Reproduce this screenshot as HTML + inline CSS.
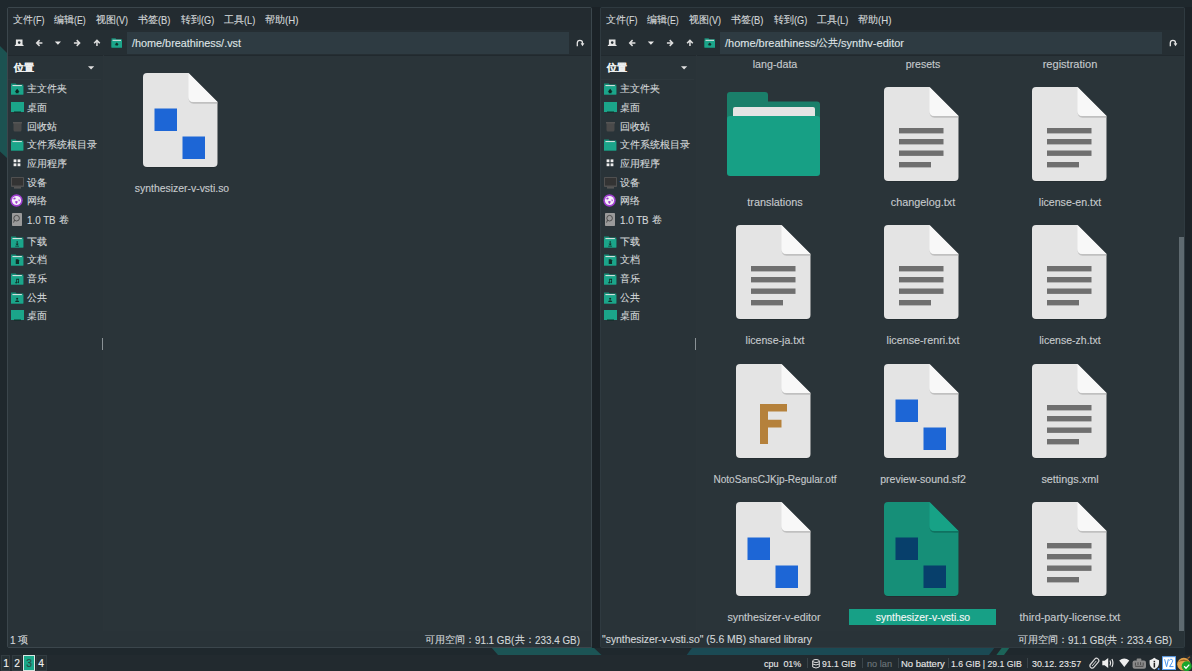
<!DOCTYPE html><html><head><meta charset="utf-8"><style>
*{margin:0;padding:0;box-sizing:border-box}
html,body{width:1192px;height:671px;overflow:hidden;background:#1f282d;font-family:"Liberation Sans",sans-serif;color:#d3d7d9}
.a{position:absolute}
.t{position:absolute;white-space:nowrap;line-height:1;-webkit-text-stroke:0.12px currentColor}
svg{position:absolute;overflow:visible}
</style></head><body>
<svg class="a" style="left:0;top:0" width="1192" height="671"><polygon points="0,45.9 7,53 7,158 0,151.6" fill="#1c5251"/><polygon points="491,647 593,647 601.5,655 498,655" fill="#1c5455"/><polygon points="692.6,647 995,647 989,655 686.7,655" fill="#1b4a54"/><polygon points="1002.4,647 1010,647 1004,655 996.4,655" fill="#1c6459"/><rect x="592" y="7" width="8" height="641" fill="#1b2227"/><rect x="1185" y="7" width="7" height="648" fill="#1c2328"/></svg>
<div class="a" style="left:7px;top:7px;width:585px;height:641px;background:#2a3439;border:1px solid #3b464c;border-radius:2px"></div>
<div class="a" style="left:8px;top:8px;width:583px;height:22px;background:#232b30"></div>
<div class="t" style="left:13.10px;top:14.90px;font-size:10.0px;color:#d3d7d9;font-weight:normal;">文</div>
<div class="t" style="left:23.10px;top:14.90px;font-size:10.0px;color:#d3d7d9;font-weight:normal;">件</div>
<div class="t" style="left:33.10px;top:14.80px;font-size:10.6px;color:#d3d7d9;font-weight:normal;transform:scaleX(0.8417);transform-origin:0 0;white-space:pre;">(F)</div>
<div class="t" style="left:54.40px;top:14.90px;font-size:10.0px;color:#d3d7d9;font-weight:normal;">编</div>
<div class="t" style="left:64.40px;top:14.90px;font-size:10.0px;color:#d3d7d9;font-weight:normal;">辑</div>
<div class="t" style="left:74.40px;top:14.80px;font-size:10.6px;color:#d3d7d9;font-weight:normal;transform:scaleX(0.8181);transform-origin:0 0;white-space:pre;">(E)</div>
<div class="t" style="left:95.50px;top:14.90px;font-size:10.0px;color:#d3d7d9;font-weight:normal;">视</div>
<div class="t" style="left:105.50px;top:14.90px;font-size:10.0px;color:#d3d7d9;font-weight:normal;">图</div>
<div class="t" style="left:115.50px;top:14.80px;font-size:10.6px;color:#d3d7d9;font-weight:normal;transform:scaleX(0.8493);transform-origin:0 0;white-space:pre;">(V)</div>
<div class="t" style="left:138.00px;top:14.90px;font-size:10.0px;color:#d3d7d9;font-weight:normal;">书</div>
<div class="t" style="left:148.00px;top:14.90px;font-size:10.0px;color:#d3d7d9;font-weight:normal;">签</div>
<div class="t" style="left:158.00px;top:14.80px;font-size:10.6px;color:#d3d7d9;font-weight:normal;transform:scaleX(0.8847);transform-origin:0 0;white-space:pre;">(B)</div>
<div class="t" style="left:180.50px;top:14.90px;font-size:10.0px;color:#d3d7d9;font-weight:normal;">转</div>
<div class="t" style="left:190.50px;top:14.90px;font-size:10.0px;color:#d3d7d9;font-weight:normal;">到</div>
<div class="t" style="left:200.50px;top:14.80px;font-size:10.6px;color:#d3d7d9;font-weight:normal;transform:scaleX(0.8677);transform-origin:0 0;white-space:pre;">(G)</div>
<div class="t" style="left:224.00px;top:14.90px;font-size:10.0px;color:#d3d7d9;font-weight:normal;">工</div>
<div class="t" style="left:234.00px;top:14.90px;font-size:10.0px;color:#d3d7d9;font-weight:normal;">具</div>
<div class="t" style="left:244.00px;top:14.80px;font-size:10.6px;color:#d3d7d9;font-weight:normal;transform:scaleX(0.8678);transform-origin:0 0;white-space:pre;">(L)</div>
<div class="t" style="left:264.50px;top:14.90px;font-size:10.0px;color:#d3d7d9;font-weight:normal;">帮</div>
<div class="t" style="left:274.50px;top:14.90px;font-size:10.0px;color:#d3d7d9;font-weight:normal;">助</div>
<div class="t" style="left:284.50px;top:14.80px;font-size:10.6px;color:#d3d7d9;font-weight:normal;transform:scaleX(0.9113);transform-origin:0 0;white-space:pre;">(H)</div>
<div class="a" style="left:8px;top:30px;width:583px;height:25px;background:#252e33"></div>
<div class="a" style="left:126.5px;top:32px;width:442.5px;height:22px;background:#2e3b42"></div>
<div class="t" style="left:131.8px;top:38.13px;font-size:10.8px;color:#dfe3e5;font-weight:normal;transform:scaleX(1.0033);transform-origin:0 0;">/home/breathiness/.vst</div>
<svg style="left:0px;top:0px" width="130" height="60" viewBox="0 0 130 60"><path d="M15.9,39.4 H22.5 V44.6 L23.6,45.2 V46.1 H14.8 V45.2 L15.9,44.6 Z" fill="#e6e6e6"/><circle cx="19.2" cy="42.6" r="1.3" fill="#252e33"/><path d="M42.4,43 H37.2 M39.6,40.1 L36.7,43 L39.6,45.9" stroke="#dedede" stroke-width="1.5" fill="none"/><path d="M54.8,41.6 H61 L57.9,44.8 Z" fill="#e8e8e8"/><path d="M73.9,43 H79.1 M76.7,40.1 L79.6,43 L76.7,45.9" stroke="#dedede" stroke-width="1.5" fill="none"/><path d="M96.95,46.1 V41 M94.1,43.3 L96.95,40.4 L99.8,43.3" stroke="#dedede" stroke-width="1.5" fill="none"/><path d="M111.5,38.3 H115.5 L116.3,39.2 H122 V47.6 H111.5 Z" fill="#168f78"/><rect x="111.5" y="40.6" width="10.5" height="7" fill="#1ba58a"/><rect x="112.5" y="39.8" width="8.5" height="1" fill="#e8e8e8"/><path d="M116.75,42.6 L118.8,44.6 H118 V45.6 H115.5 V44.6 H114.7 Z" fill="#10302a"/></svg>
<svg style="left:576px;top:38px" width="10" height="10" viewBox="0 0 10 10"><path d="M1.3,8.2 V5 Q1.3,2.3 3.9,2.3 Q6.5,2.3 6.5,5 V5.8" stroke="#e4e4e4" stroke-width="1.3" fill="none"/><path d="M4.6,5.3 H8.4 L6.5,8.2 Z" fill="#e4e4e4"/></svg>
<div class="a" style="left:8px;top:55px;width:583px;height:1px;background:#21292e"></div>
<div class="a" style="left:8px;top:56px;width:95px;height:575px;background:#293338"></div>
<div class="a" style="left:8px;top:79px;width:93px;height:1px;background:#2d373c"></div>
<div class="t" style="left:13.70px;top:62.80px;font-size:10.0px;color:#eef0f1;font-weight:bold;">位</div>
<div class="t" style="left:23.70px;top:62.80px;font-size:10.0px;color:#eef0f1;font-weight:bold;">置</div>
<svg style="left:88.2px;top:66px" width="7" height="5" viewBox="0 0 7 5"><path d="M0,0.3 H6.2 L3.1,3.4 Z" fill="#e0e0e0"/></svg>
<svg style="left:10.8px;top:83.2px" width="12.3" height="11.5" viewBox="0 0 13 12" preserveAspectRatio="none"><path d="M0,0.5 H5 L6,1.5 H13 V12 H0 Z" fill="#168f78"/><rect x="0" y="3" width="13" height="9" fill="#1ba58a"/><rect x="1.5" y="2.2" width="10" height="1" fill="#e8e8e8"/><path d="M4,9.2 L6.5,6 L9,9.2 H8 V10.8 H5 V9.2 Z" fill="#0d2a24"/></svg>
<div class="t" style="left:27.20px;top:84.20px;font-size:10.0px;color:#d3d7d9;font-weight:normal;">主</div>
<div class="t" style="left:37.20px;top:84.20px;font-size:10.0px;color:#d3d7d9;font-weight:normal;">文</div>
<div class="t" style="left:47.20px;top:84.20px;font-size:10.0px;color:#d3d7d9;font-weight:normal;">件</div>
<div class="t" style="left:57.20px;top:84.20px;font-size:10.0px;color:#d3d7d9;font-weight:normal;">夹</div>
<svg style="left:10.8px;top:101.9px" width="13" height="11" viewBox="0 0 13 11"><rect x="0" y="0" width="13" height="10" fill="#1ba58a"/><rect x="3" y="9.5" width="7" height="1.2" fill="#10302a"/></svg>
<div class="t" style="left:27.20px;top:102.90px;font-size:10.0px;color:#d3d7d9;font-weight:normal;">桌</div>
<div class="t" style="left:37.20px;top:102.90px;font-size:10.0px;color:#d3d7d9;font-weight:normal;">面</div>
<svg style="left:10.8px;top:121.0px" width="13" height="11" viewBox="0 0 13 11"><rect x="2.5" y="1" width="8" height="9.5" rx="1.5" fill="#4a4a4a"/><rect x="2" y="1" width="9" height="1.5" fill="#555"/></svg>
<div class="t" style="left:27.20px;top:121.50px;font-size:10.0px;color:#d3d7d9;font-weight:normal;">回</div>
<div class="t" style="left:37.20px;top:121.50px;font-size:10.0px;color:#d3d7d9;font-weight:normal;">收</div>
<div class="t" style="left:47.20px;top:121.50px;font-size:10.0px;color:#d3d7d9;font-weight:normal;">站</div>
<svg style="left:10.8px;top:139.3px" width="12.3" height="11.5" viewBox="0 0 13 12" preserveAspectRatio="none"><path d="M0,0.5 H5 L6,1.5 H13 V12 H0 Z" fill="#168f78"/><rect x="0" y="3" width="13" height="9" fill="#1ba58a"/><rect x="1.5" y="2.2" width="10" height="1" fill="#e8e8e8"/></svg>
<div class="t" style="left:27.20px;top:140.30px;font-size:10.0px;color:#d3d7d9;font-weight:normal;">文</div>
<div class="t" style="left:37.20px;top:140.30px;font-size:10.0px;color:#d3d7d9;font-weight:normal;">件</div>
<div class="t" style="left:47.20px;top:140.30px;font-size:10.0px;color:#d3d7d9;font-weight:normal;">系</div>
<div class="t" style="left:57.20px;top:140.30px;font-size:10.0px;color:#d3d7d9;font-weight:normal;">统</div>
<div class="t" style="left:67.20px;top:140.30px;font-size:10.0px;color:#d3d7d9;font-weight:normal;">根</div>
<div class="t" style="left:77.20px;top:140.30px;font-size:10.0px;color:#d3d7d9;font-weight:normal;">目</div>
<div class="t" style="left:87.20px;top:140.30px;font-size:10.0px;color:#d3d7d9;font-weight:normal;">录</div>
<svg style="left:10.8px;top:158.4px" width="13" height="11" viewBox="0 0 13 11"><rect x="2.6" y="1.4" width="2.8" height="2.8" fill="#eee"/><rect x="6.6" y="1.4" width="2.8" height="2.8" fill="#eee"/><rect x="2.6" y="5.4" width="2.8" height="2.8" fill="#eee"/><rect x="6.6" y="5.4" width="2.8" height="2.8" fill="#eee"/></svg>
<div class="t" style="left:27.20px;top:158.90px;font-size:10.0px;color:#d3d7d9;font-weight:normal;">应</div>
<div class="t" style="left:37.20px;top:158.90px;font-size:10.0px;color:#d3d7d9;font-weight:normal;">用</div>
<div class="t" style="left:47.20px;top:158.90px;font-size:10.0px;color:#d3d7d9;font-weight:normal;">程</div>
<div class="t" style="left:57.20px;top:158.90px;font-size:10.0px;color:#d3d7d9;font-weight:normal;">序</div>
<svg style="left:10.8px;top:177.1px" width="13" height="12" viewBox="0 0 13 12"><rect x="0" y="0" width="13" height="10" rx="0.8" fill="#505050"/><rect x="1" y="1" width="11" height="7.5" fill="#333"/><rect x="3" y="10" width="7" height="1.6" fill="#555"/></svg>
<div class="t" style="left:27.20px;top:177.60px;font-size:10.0px;color:#d3d7d9;font-weight:normal;">设</div>
<div class="t" style="left:37.20px;top:177.60px;font-size:10.0px;color:#d3d7d9;font-weight:normal;">备</div>
<svg style="left:10.35px;top:194.2px" width="13" height="13" viewBox="0 0 13 13"><circle cx="6.5" cy="6.5" r="6.2" fill="#a03fd0"/><circle cx="6.5" cy="6.5" r="4.6" fill="#f6eefa"/><path d="M3.3,4.2 Q4.6,3 5.8,3.9 Q5.6,5.4 4.2,5.6 Q3,5.3 3.3,4.2 Z M5.2,7.2 Q6.8,6.6 7.8,7.6 Q7.6,9.6 6.3,9.9 Q5,9.1 5.2,7.2 Z M8.6,5.2 Q9.6,5.2 9.8,6.4 Q9.4,7.5 8.7,7.2 Z" fill="#a03fd0"/></svg>
<div class="t" style="left:27.20px;top:196.20px;font-size:10.0px;color:#d3d7d9;font-weight:normal;">网</div>
<div class="t" style="left:37.20px;top:196.20px;font-size:10.0px;color:#d3d7d9;font-weight:normal;">络</div>
<svg style="left:12.3px;top:213.3px" width="10" height="13" viewBox="0 0 10 13"><rect x="0" y="0" width="10" height="13" rx="0.8" fill="#9a9a9a"/><circle cx="4.6" cy="5.2" r="2.8" fill="none" stroke="#444" stroke-width="0.9"/><path d="M2.5,7 L1.6,9.6" stroke="#444" stroke-width="0.9"/></svg>
<div class="t" style="left:27.20px;top:214.70px;font-size:10.6px;color:#d3d7d9;font-weight:normal;transform:scaleX(0.9236);transform-origin:0 0;white-space:pre;">1.0 TB </div>
<div class="t" style="left:58.58px;top:214.80px;font-size:10.0px;color:#d3d7d9;font-weight:normal;">卷</div>
<svg style="left:10.8px;top:235.6px" width="12.3" height="11.5" viewBox="0 0 13 12" preserveAspectRatio="none"><path d="M0,0.5 H5 L6,1.5 H13 V12 H0 Z" fill="#168f78"/><rect x="0" y="3" width="13" height="9" fill="#1ba58a"/><rect x="1.5" y="2.2" width="10" height="1" fill="#e8e8e8"/><path d="M6,5.3 H7 V8 H8.3 L6.5,10 L4.7,8 H6 Z M4.5,10.3 H8.5 V11 H4.5 Z" fill="#10302a"/></svg>
<div class="t" style="left:27.20px;top:236.60px;font-size:10.0px;color:#d3d7d9;font-weight:normal;">下</div>
<div class="t" style="left:37.20px;top:236.60px;font-size:10.0px;color:#d3d7d9;font-weight:normal;">载</div>
<svg style="left:10.8px;top:254.3px" width="12.3" height="11.5" viewBox="0 0 13 12" preserveAspectRatio="none"><path d="M0,0.5 H5 L6,1.5 H13 V12 H0 Z" fill="#168f78"/><rect x="0" y="3" width="13" height="9" fill="#1ba58a"/><rect x="1.5" y="2.2" width="10" height="1" fill="#e8e8e8"/><path d="M5,5.5 H7.5 L8.5,6.5 V10.5 H5 Z" fill="#10302a"/></svg>
<div class="t" style="left:27.20px;top:255.30px;font-size:10.0px;color:#d3d7d9;font-weight:normal;">文</div>
<div class="t" style="left:37.20px;top:255.30px;font-size:10.0px;color:#d3d7d9;font-weight:normal;">档</div>
<svg style="left:10.8px;top:272.9px" width="12.3" height="11.5" viewBox="0 0 13 12" preserveAspectRatio="none"><path d="M0,0.5 H5 L6,1.5 H13 V12 H0 Z" fill="#168f78"/><rect x="0" y="3" width="13" height="9" fill="#1ba58a"/><rect x="1.5" y="2.2" width="10" height="1" fill="#e8e8e8"/><path d="M5.5,6 H8.5 V9.5 A0.9,0.9 0 1 1 7.7,8.8 V7 H6.3 V9.8 A0.9,0.9 0 1 1 5.5,9.1 Z" fill="#10302a"/></svg>
<div class="t" style="left:27.20px;top:273.90px;font-size:10.0px;color:#d3d7d9;font-weight:normal;">音</div>
<div class="t" style="left:37.20px;top:273.90px;font-size:10.0px;color:#d3d7d9;font-weight:normal;">乐</div>
<svg style="left:10.8px;top:291.6px" width="12.3" height="11.5" viewBox="0 0 13 12" preserveAspectRatio="none"><path d="M0,0.5 H5 L6,1.5 H13 V12 H0 Z" fill="#168f78"/><rect x="0" y="3" width="13" height="9" fill="#1ba58a"/><rect x="1.5" y="2.2" width="10" height="1" fill="#e8e8e8"/><circle cx="6.5" cy="7" r="1.1" fill="#10302a"/><path d="M4.3,10.5 Q4.5,8.6 6.5,8.6 Q8.5,8.6 8.7,10.5 Z" fill="#10302a"/></svg>
<div class="t" style="left:27.20px;top:292.60px;font-size:10.0px;color:#d3d7d9;font-weight:normal;">公</div>
<div class="t" style="left:37.20px;top:292.60px;font-size:10.0px;color:#d3d7d9;font-weight:normal;">共</div>
<svg style="left:10.8px;top:310.2px" width="13" height="11" viewBox="0 0 13 11"><rect x="0" y="0" width="13" height="10" fill="#1ba58a"/><rect x="3" y="9.5" width="7" height="1.2" fill="#10302a"/></svg>
<div class="t" style="left:27.20px;top:311.20px;font-size:10.0px;color:#d3d7d9;font-weight:normal;">桌</div>
<div class="t" style="left:37.20px;top:311.20px;font-size:10.0px;color:#d3d7d9;font-weight:normal;">面</div>
<div class="a" style="left:103px;top:55px;width:1px;height:576px;background:#2b3439"></div>
<div class="a" style="left:102px;top:337.5px;width:1px;height:12.5px;background:#8a9296"></div>
<div class="a" style="left:8px;top:631px;width:583px;height:16px;background:#293338"></div>
<div class="t" style="left:9.50px;top:634.90px;font-size:10.6px;color:#d3d7d9;font-weight:normal;transform:scaleX(0.9413);transform-origin:0 0;white-space:pre;">1 </div>
<div class="t" style="left:17.82px;top:635.00px;font-size:10.0px;color:#d3d7d9;font-weight:normal;">项</div>
<div class="t" style="left:425.34px;top:635.00px;font-size:10.0px;color:#d3d7d9;font-weight:normal;">可</div>
<div class="t" style="left:435.34px;top:635.00px;font-size:10.0px;color:#d3d7d9;font-weight:normal;">用</div>
<div class="t" style="left:445.34px;top:635.00px;font-size:10.0px;color:#d3d7d9;font-weight:normal;">空</div>
<div class="t" style="left:455.34px;top:635.00px;font-size:10.0px;color:#d3d7d9;font-weight:normal;">间</div>
<div class="t" style="left:465.34px;top:635.00px;font-size:10.0px;color:#d3d7d9;font-weight:normal;">：</div>
<div class="t" style="left:475.34px;top:634.90px;font-size:10.6px;color:#d3d7d9;font-weight:normal;transform:scaleX(0.9246);transform-origin:0 0;white-space:pre;">91.1 GB(</div>
<div class="t" style="left:514.56px;top:635.00px;font-size:10.0px;color:#d3d7d9;font-weight:normal;">共</div>
<div class="t" style="left:524.56px;top:635.00px;font-size:10.0px;color:#d3d7d9;font-weight:normal;">：</div>
<div class="t" style="left:534.56px;top:634.90px;font-size:10.6px;color:#d3d7d9;font-weight:normal;transform:scaleX(0.9302);transform-origin:0 0;white-space:pre;">233.4 GB)</div>
<svg style="left:143px;top:73px" width="74.5" height="95" viewBox="0 0 74.5 95"><path d="M4,0.6 H45.5 L74.5,29 V90.6 Q74.5,94.6 70.5,94.6 H4 Q0,94.6 0,90.6 V4 Z" fill="#000" opacity="0.25"/><path d="M4,0 H45.5 L74.5,29 V90 Q74.5,94 70.5,94 H4 Q0,94 0,90 V4 Q0,0 4,0 Z" fill="#e4e4e4"/><path d="M45.5,24 Q45.5,30.8 50.5,30.8 H74.5 V29 H50.5 Q45.5,29 45.5,24 Z" fill="#a9a9a9" opacity="0.6"/><path d="M45.5,0 L74.5,29 H50.5 Q45.5,29 45.5,24 Z" fill="#f8f8f8"/><rect x="11.5" y="35.5" width="22.5" height="22.5" fill="#1d66d6"/><rect x="39.5" y="63.5" width="22.5" height="22.5" fill="#1d66d6"/></svg>
<div class="t" style="left:31.599999999999994px;width:300px;text-align:center;top:182.81px;font-size:10.7px;color:#c6cacd;transform:scaleX(0.9741);transform-origin:50% 0;">synthesizer-v-vsti.so</div>
<div class="a" style="left:600px;top:7px;width:585px;height:641px;background:#2a3439;border:1px solid #2f3a40;border-radius:2px"></div>
<div class="a" style="left:601px;top:8px;width:583px;height:22px;background:#232b30"></div>
<div class="t" style="left:606.10px;top:14.90px;font-size:10.0px;color:#d3d7d9;font-weight:normal;">文</div>
<div class="t" style="left:616.10px;top:14.90px;font-size:10.0px;color:#d3d7d9;font-weight:normal;">件</div>
<div class="t" style="left:626.10px;top:14.80px;font-size:10.6px;color:#d3d7d9;font-weight:normal;transform:scaleX(0.8417);transform-origin:0 0;white-space:pre;">(F)</div>
<div class="t" style="left:647.40px;top:14.90px;font-size:10.0px;color:#d3d7d9;font-weight:normal;">编</div>
<div class="t" style="left:657.40px;top:14.90px;font-size:10.0px;color:#d3d7d9;font-weight:normal;">辑</div>
<div class="t" style="left:667.40px;top:14.80px;font-size:10.6px;color:#d3d7d9;font-weight:normal;transform:scaleX(0.8181);transform-origin:0 0;white-space:pre;">(E)</div>
<div class="t" style="left:688.50px;top:14.90px;font-size:10.0px;color:#d3d7d9;font-weight:normal;">视</div>
<div class="t" style="left:698.50px;top:14.90px;font-size:10.0px;color:#d3d7d9;font-weight:normal;">图</div>
<div class="t" style="left:708.50px;top:14.80px;font-size:10.6px;color:#d3d7d9;font-weight:normal;transform:scaleX(0.8493);transform-origin:0 0;white-space:pre;">(V)</div>
<div class="t" style="left:731.00px;top:14.90px;font-size:10.0px;color:#d3d7d9;font-weight:normal;">书</div>
<div class="t" style="left:741.00px;top:14.90px;font-size:10.0px;color:#d3d7d9;font-weight:normal;">签</div>
<div class="t" style="left:751.00px;top:14.80px;font-size:10.6px;color:#d3d7d9;font-weight:normal;transform:scaleX(0.8847);transform-origin:0 0;white-space:pre;">(B)</div>
<div class="t" style="left:773.50px;top:14.90px;font-size:10.0px;color:#d3d7d9;font-weight:normal;">转</div>
<div class="t" style="left:783.50px;top:14.90px;font-size:10.0px;color:#d3d7d9;font-weight:normal;">到</div>
<div class="t" style="left:793.50px;top:14.80px;font-size:10.6px;color:#d3d7d9;font-weight:normal;transform:scaleX(0.8677);transform-origin:0 0;white-space:pre;">(G)</div>
<div class="t" style="left:817.00px;top:14.90px;font-size:10.0px;color:#d3d7d9;font-weight:normal;">工</div>
<div class="t" style="left:827.00px;top:14.90px;font-size:10.0px;color:#d3d7d9;font-weight:normal;">具</div>
<div class="t" style="left:837.00px;top:14.80px;font-size:10.6px;color:#d3d7d9;font-weight:normal;transform:scaleX(0.8678);transform-origin:0 0;white-space:pre;">(L)</div>
<div class="t" style="left:857.50px;top:14.90px;font-size:10.0px;color:#d3d7d9;font-weight:normal;">帮</div>
<div class="t" style="left:867.50px;top:14.90px;font-size:10.0px;color:#d3d7d9;font-weight:normal;">助</div>
<div class="t" style="left:877.50px;top:14.80px;font-size:10.6px;color:#d3d7d9;font-weight:normal;transform:scaleX(0.9113);transform-origin:0 0;white-space:pre;">(H)</div>
<div class="a" style="left:601px;top:30px;width:583px;height:25px;background:#252e33"></div>
<div class="a" style="left:719.5px;top:32px;width:442.5px;height:22px;background:#2e3b42"></div>
<div class="t" style="left:724.80px;top:38.13px;font-size:10.8px;color:#dfe3e5;font-weight:normal;transform:scaleX(1.0178);transform-origin:0 0;white-space:pre;">/home/breathiness/</div>
<div class="t" style="left:818.28px;top:38.40px;font-size:10.0px;color:#dfe3e5;font-weight:normal;">公</div>
<div class="t" style="left:828.28px;top:38.40px;font-size:10.0px;color:#dfe3e5;font-weight:normal;">共</div>
<div class="t" style="left:838.28px;top:38.13px;font-size:10.8px;color:#dfe3e5;font-weight:normal;transform:scaleX(1.0188);transform-origin:0 0;white-space:pre;">/synthv-editor</div>
<svg style="left:593px;top:0px" width="130" height="60" viewBox="0 0 130 60"><path d="M15.9,39.4 H22.5 V44.6 L23.6,45.2 V46.1 H14.8 V45.2 L15.9,44.6 Z" fill="#e6e6e6"/><circle cx="19.2" cy="42.6" r="1.3" fill="#252e33"/><path d="M42.4,43 H37.2 M39.6,40.1 L36.7,43 L39.6,45.9" stroke="#dedede" stroke-width="1.5" fill="none"/><path d="M54.8,41.6 H61 L57.9,44.8 Z" fill="#e8e8e8"/><path d="M73.9,43 H79.1 M76.7,40.1 L79.6,43 L76.7,45.9" stroke="#dedede" stroke-width="1.5" fill="none"/><path d="M96.95,46.1 V41 M94.1,43.3 L96.95,40.4 L99.8,43.3" stroke="#dedede" stroke-width="1.5" fill="none"/><path d="M111.5,38.3 H115.5 L116.3,39.2 H122 V47.6 H111.5 Z" fill="#168f78"/><rect x="111.5" y="40.6" width="10.5" height="7" fill="#1ba58a"/><rect x="112.5" y="39.8" width="8.5" height="1" fill="#e8e8e8"/><path d="M116.75,42.6 L118.8,44.6 H118 V45.6 H115.5 V44.6 H114.7 Z" fill="#10302a"/></svg>
<svg style="left:1169px;top:38px" width="10" height="10" viewBox="0 0 10 10"><path d="M1.3,8.2 V5 Q1.3,2.3 3.9,2.3 Q6.5,2.3 6.5,5 V5.8" stroke="#e4e4e4" stroke-width="1.3" fill="none"/><path d="M4.6,5.3 H8.4 L6.5,8.2 Z" fill="#e4e4e4"/></svg>
<div class="a" style="left:601px;top:55px;width:583px;height:1px;background:#21292e"></div>
<div class="a" style="left:601px;top:56px;width:95px;height:575px;background:#293338"></div>
<div class="a" style="left:601px;top:79px;width:93px;height:1px;background:#2d373c"></div>
<div class="t" style="left:606.70px;top:62.80px;font-size:10.0px;color:#eef0f1;font-weight:bold;">位</div>
<div class="t" style="left:616.70px;top:62.80px;font-size:10.0px;color:#eef0f1;font-weight:bold;">置</div>
<svg style="left:681.2px;top:66px" width="7" height="5" viewBox="0 0 7 5"><path d="M0,0.3 H6.2 L3.1,3.4 Z" fill="#e0e0e0"/></svg>
<svg style="left:603.8px;top:83.2px" width="12.3" height="11.5" viewBox="0 0 13 12" preserveAspectRatio="none"><path d="M0,0.5 H5 L6,1.5 H13 V12 H0 Z" fill="#168f78"/><rect x="0" y="3" width="13" height="9" fill="#1ba58a"/><rect x="1.5" y="2.2" width="10" height="1" fill="#e8e8e8"/><path d="M4,9.2 L6.5,6 L9,9.2 H8 V10.8 H5 V9.2 Z" fill="#0d2a24"/></svg>
<div class="t" style="left:620.20px;top:84.20px;font-size:10.0px;color:#d3d7d9;font-weight:normal;">主</div>
<div class="t" style="left:630.20px;top:84.20px;font-size:10.0px;color:#d3d7d9;font-weight:normal;">文</div>
<div class="t" style="left:640.20px;top:84.20px;font-size:10.0px;color:#d3d7d9;font-weight:normal;">件</div>
<div class="t" style="left:650.20px;top:84.20px;font-size:10.0px;color:#d3d7d9;font-weight:normal;">夹</div>
<svg style="left:603.8px;top:101.9px" width="13" height="11" viewBox="0 0 13 11"><rect x="0" y="0" width="13" height="10" fill="#1ba58a"/><rect x="3" y="9.5" width="7" height="1.2" fill="#10302a"/></svg>
<div class="t" style="left:620.20px;top:102.90px;font-size:10.0px;color:#d3d7d9;font-weight:normal;">桌</div>
<div class="t" style="left:630.20px;top:102.90px;font-size:10.0px;color:#d3d7d9;font-weight:normal;">面</div>
<svg style="left:603.8px;top:121.0px" width="13" height="11" viewBox="0 0 13 11"><rect x="2.5" y="1" width="8" height="9.5" rx="1.5" fill="#4a4a4a"/><rect x="2" y="1" width="9" height="1.5" fill="#555"/></svg>
<div class="t" style="left:620.20px;top:121.50px;font-size:10.0px;color:#d3d7d9;font-weight:normal;">回</div>
<div class="t" style="left:630.20px;top:121.50px;font-size:10.0px;color:#d3d7d9;font-weight:normal;">收</div>
<div class="t" style="left:640.20px;top:121.50px;font-size:10.0px;color:#d3d7d9;font-weight:normal;">站</div>
<svg style="left:603.8px;top:139.3px" width="12.3" height="11.5" viewBox="0 0 13 12" preserveAspectRatio="none"><path d="M0,0.5 H5 L6,1.5 H13 V12 H0 Z" fill="#168f78"/><rect x="0" y="3" width="13" height="9" fill="#1ba58a"/><rect x="1.5" y="2.2" width="10" height="1" fill="#e8e8e8"/></svg>
<div class="t" style="left:620.20px;top:140.30px;font-size:10.0px;color:#d3d7d9;font-weight:normal;">文</div>
<div class="t" style="left:630.20px;top:140.30px;font-size:10.0px;color:#d3d7d9;font-weight:normal;">件</div>
<div class="t" style="left:640.20px;top:140.30px;font-size:10.0px;color:#d3d7d9;font-weight:normal;">系</div>
<div class="t" style="left:650.20px;top:140.30px;font-size:10.0px;color:#d3d7d9;font-weight:normal;">统</div>
<div class="t" style="left:660.20px;top:140.30px;font-size:10.0px;color:#d3d7d9;font-weight:normal;">根</div>
<div class="t" style="left:670.20px;top:140.30px;font-size:10.0px;color:#d3d7d9;font-weight:normal;">目</div>
<div class="t" style="left:680.20px;top:140.30px;font-size:10.0px;color:#d3d7d9;font-weight:normal;">录</div>
<svg style="left:603.8px;top:158.4px" width="13" height="11" viewBox="0 0 13 11"><rect x="2.6" y="1.4" width="2.8" height="2.8" fill="#eee"/><rect x="6.6" y="1.4" width="2.8" height="2.8" fill="#eee"/><rect x="2.6" y="5.4" width="2.8" height="2.8" fill="#eee"/><rect x="6.6" y="5.4" width="2.8" height="2.8" fill="#eee"/></svg>
<div class="t" style="left:620.20px;top:158.90px;font-size:10.0px;color:#d3d7d9;font-weight:normal;">应</div>
<div class="t" style="left:630.20px;top:158.90px;font-size:10.0px;color:#d3d7d9;font-weight:normal;">用</div>
<div class="t" style="left:640.20px;top:158.90px;font-size:10.0px;color:#d3d7d9;font-weight:normal;">程</div>
<div class="t" style="left:650.20px;top:158.90px;font-size:10.0px;color:#d3d7d9;font-weight:normal;">序</div>
<svg style="left:603.8px;top:177.1px" width="13" height="12" viewBox="0 0 13 12"><rect x="0" y="0" width="13" height="10" rx="0.8" fill="#505050"/><rect x="1" y="1" width="11" height="7.5" fill="#333"/><rect x="3" y="10" width="7" height="1.6" fill="#555"/></svg>
<div class="t" style="left:620.20px;top:177.60px;font-size:10.0px;color:#d3d7d9;font-weight:normal;">设</div>
<div class="t" style="left:630.20px;top:177.60px;font-size:10.0px;color:#d3d7d9;font-weight:normal;">备</div>
<svg style="left:603.35px;top:194.2px" width="13" height="13" viewBox="0 0 13 13"><circle cx="6.5" cy="6.5" r="6.2" fill="#a03fd0"/><circle cx="6.5" cy="6.5" r="4.6" fill="#f6eefa"/><path d="M3.3,4.2 Q4.6,3 5.8,3.9 Q5.6,5.4 4.2,5.6 Q3,5.3 3.3,4.2 Z M5.2,7.2 Q6.8,6.6 7.8,7.6 Q7.6,9.6 6.3,9.9 Q5,9.1 5.2,7.2 Z M8.6,5.2 Q9.6,5.2 9.8,6.4 Q9.4,7.5 8.7,7.2 Z" fill="#a03fd0"/></svg>
<div class="t" style="left:620.20px;top:196.20px;font-size:10.0px;color:#d3d7d9;font-weight:normal;">网</div>
<div class="t" style="left:630.20px;top:196.20px;font-size:10.0px;color:#d3d7d9;font-weight:normal;">络</div>
<svg style="left:605.3px;top:213.3px" width="10" height="13" viewBox="0 0 10 13"><rect x="0" y="0" width="10" height="13" rx="0.8" fill="#9a9a9a"/><circle cx="4.6" cy="5.2" r="2.8" fill="none" stroke="#444" stroke-width="0.9"/><path d="M2.5,7 L1.6,9.6" stroke="#444" stroke-width="0.9"/></svg>
<div class="t" style="left:620.20px;top:214.70px;font-size:10.6px;color:#d3d7d9;font-weight:normal;transform:scaleX(0.9236);transform-origin:0 0;white-space:pre;">1.0 TB </div>
<div class="t" style="left:651.58px;top:214.80px;font-size:10.0px;color:#d3d7d9;font-weight:normal;">卷</div>
<svg style="left:603.8px;top:235.6px" width="12.3" height="11.5" viewBox="0 0 13 12" preserveAspectRatio="none"><path d="M0,0.5 H5 L6,1.5 H13 V12 H0 Z" fill="#168f78"/><rect x="0" y="3" width="13" height="9" fill="#1ba58a"/><rect x="1.5" y="2.2" width="10" height="1" fill="#e8e8e8"/><path d="M6,5.3 H7 V8 H8.3 L6.5,10 L4.7,8 H6 Z M4.5,10.3 H8.5 V11 H4.5 Z" fill="#10302a"/></svg>
<div class="t" style="left:620.20px;top:236.60px;font-size:10.0px;color:#d3d7d9;font-weight:normal;">下</div>
<div class="t" style="left:630.20px;top:236.60px;font-size:10.0px;color:#d3d7d9;font-weight:normal;">载</div>
<svg style="left:603.8px;top:254.3px" width="12.3" height="11.5" viewBox="0 0 13 12" preserveAspectRatio="none"><path d="M0,0.5 H5 L6,1.5 H13 V12 H0 Z" fill="#168f78"/><rect x="0" y="3" width="13" height="9" fill="#1ba58a"/><rect x="1.5" y="2.2" width="10" height="1" fill="#e8e8e8"/><path d="M5,5.5 H7.5 L8.5,6.5 V10.5 H5 Z" fill="#10302a"/></svg>
<div class="t" style="left:620.20px;top:255.30px;font-size:10.0px;color:#d3d7d9;font-weight:normal;">文</div>
<div class="t" style="left:630.20px;top:255.30px;font-size:10.0px;color:#d3d7d9;font-weight:normal;">档</div>
<svg style="left:603.8px;top:272.9px" width="12.3" height="11.5" viewBox="0 0 13 12" preserveAspectRatio="none"><path d="M0,0.5 H5 L6,1.5 H13 V12 H0 Z" fill="#168f78"/><rect x="0" y="3" width="13" height="9" fill="#1ba58a"/><rect x="1.5" y="2.2" width="10" height="1" fill="#e8e8e8"/><path d="M5.5,6 H8.5 V9.5 A0.9,0.9 0 1 1 7.7,8.8 V7 H6.3 V9.8 A0.9,0.9 0 1 1 5.5,9.1 Z" fill="#10302a"/></svg>
<div class="t" style="left:620.20px;top:273.90px;font-size:10.0px;color:#d3d7d9;font-weight:normal;">音</div>
<div class="t" style="left:630.20px;top:273.90px;font-size:10.0px;color:#d3d7d9;font-weight:normal;">乐</div>
<svg style="left:603.8px;top:291.6px" width="12.3" height="11.5" viewBox="0 0 13 12" preserveAspectRatio="none"><path d="M0,0.5 H5 L6,1.5 H13 V12 H0 Z" fill="#168f78"/><rect x="0" y="3" width="13" height="9" fill="#1ba58a"/><rect x="1.5" y="2.2" width="10" height="1" fill="#e8e8e8"/><circle cx="6.5" cy="7" r="1.1" fill="#10302a"/><path d="M4.3,10.5 Q4.5,8.6 6.5,8.6 Q8.5,8.6 8.7,10.5 Z" fill="#10302a"/></svg>
<div class="t" style="left:620.20px;top:292.60px;font-size:10.0px;color:#d3d7d9;font-weight:normal;">公</div>
<div class="t" style="left:630.20px;top:292.60px;font-size:10.0px;color:#d3d7d9;font-weight:normal;">共</div>
<svg style="left:603.8px;top:310.2px" width="13" height="11" viewBox="0 0 13 11"><rect x="0" y="0" width="13" height="10" fill="#1ba58a"/><rect x="3" y="9.5" width="7" height="1.2" fill="#10302a"/></svg>
<div class="t" style="left:620.20px;top:311.20px;font-size:10.0px;color:#d3d7d9;font-weight:normal;">桌</div>
<div class="t" style="left:630.20px;top:311.20px;font-size:10.0px;color:#d3d7d9;font-weight:normal;">面</div>
<div class="a" style="left:696px;top:55px;width:1px;height:576px;background:#2b3439"></div>
<div class="a" style="left:695px;top:337.5px;width:1px;height:12.5px;background:#8a9296"></div>
<div class="a" style="left:601px;top:631px;width:583px;height:16px;background:#293338"></div>
<div class="t" style="left:601.8px;top:635.15px;font-size:10.3px;color:#d3d7d9;font-weight:normal;transform:scaleX(1.0086);transform-origin:0 0;">"synthesizer-v-vsti.so" (5.6 MB) shared library</div>
<div class="t" style="left:1018.04px;top:635.00px;font-size:10.0px;color:#d3d7d9;font-weight:normal;">可</div>
<div class="t" style="left:1028.04px;top:635.00px;font-size:10.0px;color:#d3d7d9;font-weight:normal;">用</div>
<div class="t" style="left:1038.04px;top:635.00px;font-size:10.0px;color:#d3d7d9;font-weight:normal;">空</div>
<div class="t" style="left:1048.04px;top:635.00px;font-size:10.0px;color:#d3d7d9;font-weight:normal;">间</div>
<div class="t" style="left:1058.04px;top:635.00px;font-size:10.0px;color:#d3d7d9;font-weight:normal;">：</div>
<div class="t" style="left:1068.04px;top:634.90px;font-size:10.6px;color:#d3d7d9;font-weight:normal;transform:scaleX(0.9246);transform-origin:0 0;white-space:pre;">91.1 GB(</div>
<div class="t" style="left:1107.26px;top:635.00px;font-size:10.0px;color:#d3d7d9;font-weight:normal;">共</div>
<div class="t" style="left:1117.26px;top:635.00px;font-size:10.0px;color:#d3d7d9;font-weight:normal;">：</div>
<div class="t" style="left:1127.26px;top:634.90px;font-size:10.6px;color:#d3d7d9;font-weight:normal;transform:scaleX(0.9302);transform-origin:0 0;white-space:pre;">233.4 GB)</div>
<div class="a" style="left:1179px;top:237px;width:5px;height:394px;background:#5f6a70"></div>
<div class="t" style="left:624.8px;width:300px;text-align:center;top:58.51px;font-size:10.7px;color:#c6cacd;transform:scaleX(1.0023);transform-origin:50% 0;">lang-data</div>
<div class="t" style="left:772.6px;width:300px;text-align:center;top:58.51px;font-size:10.7px;color:#c6cacd;transform:scaleX(0.9848);transform-origin:50% 0;">presets</div>
<div class="t" style="left:920.4000000000001px;width:300px;text-align:center;top:58.51px;font-size:10.7px;color:#c6cacd;transform:scaleX(1.0327);transform-origin:50% 0;">registration</div>
<svg style="left:727px;top:92px" width="94" height="85" viewBox="0 0 94 85"><path d="M3,0 H38 Q41,0 41,3 V9.5 H90 Q93,9.5 93,12.5 V80 H0 V3 Q0,0 3,0 Z" fill="#1a7f6a"/><rect x="6" y="15" width="82" height="20" rx="2" fill="#e4e4e4"/><path d="M3,24 H90 Q93,24 93,27 V81 Q93,84 90,84 H3 Q0,84 0,81 V27 Q0,24 3,24 Z" fill="#17a085"/></svg>
<svg style="left:884px;top:87px" width="74.5" height="95" viewBox="0 0 74.5 95"><path d="M4,0.6 H45.5 L74.5,29 V90.6 Q74.5,94.6 70.5,94.6 H4 Q0,94.6 0,90.6 V4 Z" fill="#000" opacity="0.25"/><path d="M4,0 H45.5 L74.5,29 V90 Q74.5,94 70.5,94 H4 Q0,94 0,90 V4 Q0,0 4,0 Z" fill="#e4e4e4"/><path d="M45.5,24 Q45.5,30.8 50.5,30.8 H74.5 V29 H50.5 Q45.5,29 45.5,24 Z" fill="#a9a9a9" opacity="0.6"/><path d="M45.5,0 L74.5,29 H50.5 Q45.5,29 45.5,24 Z" fill="#f8f8f8"/><rect x="15" y="41" width="44.5" height="5.4" fill="#6f6f6f"/><rect x="15" y="52" width="44.5" height="5.4" fill="#6f6f6f"/><rect x="15" y="63.5" width="44.5" height="5.4" fill="#6f6f6f"/><rect x="15" y="75" width="32" height="5.4" fill="#6f6f6f"/></svg>
<svg style="left:1032px;top:87px" width="74.5" height="95" viewBox="0 0 74.5 95"><path d="M4,0.6 H45.5 L74.5,29 V90.6 Q74.5,94.6 70.5,94.6 H4 Q0,94.6 0,90.6 V4 Z" fill="#000" opacity="0.25"/><path d="M4,0 H45.5 L74.5,29 V90 Q74.5,94 70.5,94 H4 Q0,94 0,90 V4 Q0,0 4,0 Z" fill="#e4e4e4"/><path d="M45.5,24 Q45.5,30.8 50.5,30.8 H74.5 V29 H50.5 Q45.5,29 45.5,24 Z" fill="#a9a9a9" opacity="0.6"/><path d="M45.5,0 L74.5,29 H50.5 Q45.5,29 45.5,24 Z" fill="#f8f8f8"/><rect x="15" y="41" width="44.5" height="5.4" fill="#6f6f6f"/><rect x="15" y="52" width="44.5" height="5.4" fill="#6f6f6f"/><rect x="15" y="63.5" width="44.5" height="5.4" fill="#6f6f6f"/><rect x="15" y="75" width="32" height="5.4" fill="#6f6f6f"/></svg>
<div class="t" style="left:624.8px;width:300px;text-align:center;top:196.81px;font-size:10.7px;color:#c6cacd;transform:scaleX(1.0147);transform-origin:50% 0;">translations</div>
<div class="t" style="left:772.6px;width:300px;text-align:center;top:196.81px;font-size:10.7px;color:#c6cacd;transform:scaleX(1.0139);transform-origin:50% 0;">changelog.txt</div>
<div class="t" style="left:920.4000000000001px;width:300px;text-align:center;top:196.81px;font-size:10.7px;color:#c6cacd;transform:scaleX(0.9905);transform-origin:50% 0;">license-en.txt</div>
<svg style="left:736px;top:225px" width="74.5" height="95" viewBox="0 0 74.5 95"><path d="M4,0.6 H45.5 L74.5,29 V90.6 Q74.5,94.6 70.5,94.6 H4 Q0,94.6 0,90.6 V4 Z" fill="#000" opacity="0.25"/><path d="M4,0 H45.5 L74.5,29 V90 Q74.5,94 70.5,94 H4 Q0,94 0,90 V4 Q0,0 4,0 Z" fill="#e4e4e4"/><path d="M45.5,24 Q45.5,30.8 50.5,30.8 H74.5 V29 H50.5 Q45.5,29 45.5,24 Z" fill="#a9a9a9" opacity="0.6"/><path d="M45.5,0 L74.5,29 H50.5 Q45.5,29 45.5,24 Z" fill="#f8f8f8"/><rect x="15" y="41" width="44.5" height="5.4" fill="#6f6f6f"/><rect x="15" y="52" width="44.5" height="5.4" fill="#6f6f6f"/><rect x="15" y="63.5" width="44.5" height="5.4" fill="#6f6f6f"/><rect x="15" y="75" width="32" height="5.4" fill="#6f6f6f"/></svg>
<svg style="left:884px;top:225px" width="74.5" height="95" viewBox="0 0 74.5 95"><path d="M4,0.6 H45.5 L74.5,29 V90.6 Q74.5,94.6 70.5,94.6 H4 Q0,94.6 0,90.6 V4 Z" fill="#000" opacity="0.25"/><path d="M4,0 H45.5 L74.5,29 V90 Q74.5,94 70.5,94 H4 Q0,94 0,90 V4 Q0,0 4,0 Z" fill="#e4e4e4"/><path d="M45.5,24 Q45.5,30.8 50.5,30.8 H74.5 V29 H50.5 Q45.5,29 45.5,24 Z" fill="#a9a9a9" opacity="0.6"/><path d="M45.5,0 L74.5,29 H50.5 Q45.5,29 45.5,24 Z" fill="#f8f8f8"/><rect x="15" y="41" width="44.5" height="5.4" fill="#6f6f6f"/><rect x="15" y="52" width="44.5" height="5.4" fill="#6f6f6f"/><rect x="15" y="63.5" width="44.5" height="5.4" fill="#6f6f6f"/><rect x="15" y="75" width="32" height="5.4" fill="#6f6f6f"/></svg>
<svg style="left:1032px;top:225px" width="74.5" height="95" viewBox="0 0 74.5 95"><path d="M4,0.6 H45.5 L74.5,29 V90.6 Q74.5,94.6 70.5,94.6 H4 Q0,94.6 0,90.6 V4 Z" fill="#000" opacity="0.25"/><path d="M4,0 H45.5 L74.5,29 V90 Q74.5,94 70.5,94 H4 Q0,94 0,90 V4 Q0,0 4,0 Z" fill="#e4e4e4"/><path d="M45.5,24 Q45.5,30.8 50.5,30.8 H74.5 V29 H50.5 Q45.5,29 45.5,24 Z" fill="#a9a9a9" opacity="0.6"/><path d="M45.5,0 L74.5,29 H50.5 Q45.5,29 45.5,24 Z" fill="#f8f8f8"/><rect x="15" y="41" width="44.5" height="5.4" fill="#6f6f6f"/><rect x="15" y="52" width="44.5" height="5.4" fill="#6f6f6f"/><rect x="15" y="63.5" width="44.5" height="5.4" fill="#6f6f6f"/><rect x="15" y="75" width="32" height="5.4" fill="#6f6f6f"/></svg>
<div class="t" style="left:624.8px;width:300px;text-align:center;top:335.11px;font-size:10.7px;color:#c6cacd;transform:scaleX(0.9890);transform-origin:50% 0;">license-ja.txt</div>
<div class="t" style="left:772.6px;width:300px;text-align:center;top:335.11px;font-size:10.7px;color:#c6cacd;transform:scaleX(1.0074);transform-origin:50% 0;">license-renri.txt</div>
<div class="t" style="left:920.4000000000001px;width:300px;text-align:center;top:335.11px;font-size:10.7px;color:#c6cacd;transform:scaleX(0.9850);transform-origin:50% 0;">license-zh.txt</div>
<svg style="left:736px;top:364px" width="74.5" height="95" viewBox="0 0 74.5 95"><path d="M4,0.6 H45.5 L74.5,29 V90.6 Q74.5,94.6 70.5,94.6 H4 Q0,94.6 0,90.6 V4 Z" fill="#000" opacity="0.25"/><path d="M4,0 H45.5 L74.5,29 V90 Q74.5,94 70.5,94 H4 Q0,94 0,90 V4 Q0,0 4,0 Z" fill="#e4e4e4"/><path d="M45.5,24 Q45.5,30.8 50.5,30.8 H74.5 V29 H50.5 Q45.5,29 45.5,24 Z" fill="#a9a9a9" opacity="0.6"/><path d="M45.5,0 L74.5,29 H50.5 Q45.5,29 45.5,24 Z" fill="#f8f8f8"/><path d="M24,40 H51 V47.6 H32 V55.8 H45.5 V63.4 H32 V80 H24 Z" fill="#b5813b"/></svg>
<svg style="left:884px;top:364px" width="74.5" height="95" viewBox="0 0 74.5 95"><path d="M4,0.6 H45.5 L74.5,29 V90.6 Q74.5,94.6 70.5,94.6 H4 Q0,94.6 0,90.6 V4 Z" fill="#000" opacity="0.25"/><path d="M4,0 H45.5 L74.5,29 V90 Q74.5,94 70.5,94 H4 Q0,94 0,90 V4 Q0,0 4,0 Z" fill="#e4e4e4"/><path d="M45.5,24 Q45.5,30.8 50.5,30.8 H74.5 V29 H50.5 Q45.5,29 45.5,24 Z" fill="#a9a9a9" opacity="0.6"/><path d="M45.5,0 L74.5,29 H50.5 Q45.5,29 45.5,24 Z" fill="#f8f8f8"/><rect x="11.5" y="35.5" width="22.5" height="22.5" fill="#1d66d6"/><rect x="39.5" y="63.5" width="22.5" height="22.5" fill="#1d66d6"/></svg>
<svg style="left:1032px;top:364px" width="74.5" height="95" viewBox="0 0 74.5 95"><path d="M4,0.6 H45.5 L74.5,29 V90.6 Q74.5,94.6 70.5,94.6 H4 Q0,94.6 0,90.6 V4 Z" fill="#000" opacity="0.25"/><path d="M4,0 H45.5 L74.5,29 V90 Q74.5,94 70.5,94 H4 Q0,94 0,90 V4 Q0,0 4,0 Z" fill="#e4e4e4"/><path d="M45.5,24 Q45.5,30.8 50.5,30.8 H74.5 V29 H50.5 Q45.5,29 45.5,24 Z" fill="#a9a9a9" opacity="0.6"/><path d="M45.5,0 L74.5,29 H50.5 Q45.5,29 45.5,24 Z" fill="#f8f8f8"/><rect x="15" y="41" width="44.5" height="5.4" fill="#6f6f6f"/><rect x="15" y="52" width="44.5" height="5.4" fill="#6f6f6f"/><rect x="15" y="63.5" width="44.5" height="5.4" fill="#6f6f6f"/><rect x="15" y="75" width="32" height="5.4" fill="#6f6f6f"/></svg>
<div class="t" style="left:624.8px;width:300px;text-align:center;top:473.51px;font-size:10.7px;color:#c6cacd;transform:scaleX(0.9421);transform-origin:50% 0;">NotoSansCJKjp-Regular.otf</div>
<div class="t" style="left:772.6px;width:300px;text-align:center;top:473.51px;font-size:10.7px;color:#c6cacd;transform:scaleX(0.9868);transform-origin:50% 0;">preview-sound.sf2</div>
<div class="t" style="left:920.4000000000001px;width:300px;text-align:center;top:473.51px;font-size:10.7px;color:#c6cacd;transform:scaleX(1.0135);transform-origin:50% 0;">settings.xml</div>
<svg style="left:736px;top:502px" width="74.5" height="95" viewBox="0 0 74.5 95"><path d="M4,0.6 H45.5 L74.5,29 V90.6 Q74.5,94.6 70.5,94.6 H4 Q0,94.6 0,90.6 V4 Z" fill="#000" opacity="0.25"/><path d="M4,0 H45.5 L74.5,29 V90 Q74.5,94 70.5,94 H4 Q0,94 0,90 V4 Q0,0 4,0 Z" fill="#e4e4e4"/><path d="M45.5,24 Q45.5,30.8 50.5,30.8 H74.5 V29 H50.5 Q45.5,29 45.5,24 Z" fill="#a9a9a9" opacity="0.6"/><path d="M45.5,0 L74.5,29 H50.5 Q45.5,29 45.5,24 Z" fill="#f8f8f8"/><rect x="11.5" y="35.5" width="22.5" height="22.5" fill="#1d66d6"/><rect x="39.5" y="63.5" width="22.5" height="22.5" fill="#1d66d6"/></svg>
<svg style="left:884px;top:502px" width="74.5" height="95" viewBox="0 0 74.5 95"><path d="M4,0.6 H45.5 L74.5,29 V90.6 Q74.5,94.6 70.5,94.6 H4 Q0,94.6 0,90.6 V4 Z" fill="#000" opacity="0.25"/><path d="M4,0 H45.5 L74.5,29 V90 Q74.5,94 70.5,94 H4 Q0,94 0,90 V4 Q0,0 4,0 Z" fill="#168f78"/><path d="M45.5,24 Q45.5,30.8 50.5,30.8 H74.5 V29 H50.5 Q45.5,29 45.5,24 Z" fill="#0c5f50" opacity="0.6"/><path d="M45.5,0 L74.5,29 H50.5 Q45.5,29 45.5,24 Z" fill="#17a286"/><rect x="11.5" y="35.5" width="22.5" height="22.5" fill="#073f6b"/><rect x="39.5" y="63.5" width="22.5" height="22.5" fill="#073f6b"/></svg>
<svg style="left:1032px;top:502px" width="74.5" height="95" viewBox="0 0 74.5 95"><path d="M4,0.6 H45.5 L74.5,29 V90.6 Q74.5,94.6 70.5,94.6 H4 Q0,94.6 0,90.6 V4 Z" fill="#000" opacity="0.25"/><path d="M4,0 H45.5 L74.5,29 V90 Q74.5,94 70.5,94 H4 Q0,94 0,90 V4 Q0,0 4,0 Z" fill="#e4e4e4"/><path d="M45.5,24 Q45.5,30.8 50.5,30.8 H74.5 V29 H50.5 Q45.5,29 45.5,24 Z" fill="#a9a9a9" opacity="0.6"/><path d="M45.5,0 L74.5,29 H50.5 Q45.5,29 45.5,24 Z" fill="#f8f8f8"/><rect x="15" y="41" width="44.5" height="5.4" fill="#6f6f6f"/><rect x="15" y="52" width="44.5" height="5.4" fill="#6f6f6f"/><rect x="15" y="63.5" width="44.5" height="5.4" fill="#6f6f6f"/><rect x="15" y="75" width="32" height="5.4" fill="#6f6f6f"/></svg>
<div class="a" style="left:849px;top:608.7px;width:147px;height:16.7px;background:#17a086"></div>
<div class="t" style="left:624px;width:300px;text-align:center;top:611.81px;font-size:10.7px;color:#c6cacd;transform:scaleX(0.9964);transform-origin:50% 0;">synthesizer-v-editor</div>
<div class="t" style="left:772.5px;width:300px;text-align:center;top:611.81px;font-size:10.7px;color:#f4f7f6;transform:scaleX(0.9745);transform-origin:50% 0;">synthesizer-v-vsti.so</div>
<div class="t" style="left:920px;width:300px;text-align:center;top:611.81px;font-size:10.7px;color:#c6cacd;transform:scaleX(1.0160);transform-origin:50% 0;">third-party-license.txt</div>
<div class="a" style="left:0;top:655px;width:1192px;height:16px;background:#222a2f"></div>
<div class="a" style="left:0.7px;top:655px;width:9.8px;height:16px;background:#263034;border:1px solid #323c41"></div>
<div class="t" style="left:-144.4px;width:300px;text-align:center;top:658.90px;font-size:10px;color:#f0f0f0;transform:scaleX(1.0287);transform-origin:50% 0;">1</div>
<div class="a" style="left:12px;top:655px;width:10.0px;height:16px;background:#263034;border:1px solid #323c41"></div>
<div class="t" style="left:-133.0px;width:300px;text-align:center;top:658.90px;font-size:10px;color:#f0f0f0;transform:scaleX(1.0287);transform-origin:50% 0;">2</div>
<div class="a" style="left:23.2px;top:655px;width:11.7px;height:16px;background:#1aa88a;border:1px solid #d8e6e2"></div>
<div class="t" style="left:-120.95px;width:300px;text-align:center;top:658.90px;font-size:10px;color:#2b4a42;transform:scaleX(1.0287);transform-origin:50% 0;">3</div>
<div class="a" style="left:36px;top:655px;width:10.6px;height:16px;background:#263034;border:1px solid #323c41"></div>
<div class="t" style="left:-108.7px;width:300px;text-align:center;top:658.90px;font-size:10px;color:#f0f0f0;transform:scaleX(1.0287);transform-origin:50% 0;">4</div>
<div class="t" style="left:763.6px;top:658.57px;font-size:9.8px;color:#e8e8e8;font-weight:normal;transform:scaleX(0.9129);transform-origin:0 0;white-space:pre">cpu  01%</div>
<div class="t" style="left:822px;top:658.57px;font-size:9.8px;color:#e8e8e8;font-weight:normal;transform:scaleX(0.8791);transform-origin:0 0;white-space:pre">91.1 GIB</div>
<div class="t" style="left:867px;top:658.57px;font-size:9.8px;color:#6d767b;font-weight:normal;transform:scaleX(0.9364);transform-origin:0 0;white-space:pre">no lan</div>
<div class="t" style="left:901px;top:658.57px;font-size:9.8px;color:#e8e8e8;font-weight:normal;transform:scaleX(0.9689);transform-origin:0 0;white-space:pre">No battery</div>
<div class="t" style="left:950.6px;top:658.57px;font-size:9.8px;color:#e8e8e8;font-weight:normal;transform:scaleX(0.8862);transform-origin:0 0;white-space:pre">1.6 GIB | 29.1 GIB</div>
<div class="t" style="left:1032px;top:658.57px;font-size:9.8px;color:#e8e8e8;font-weight:normal;transform:scaleX(0.9030);transform-origin:0 0;white-space:pre">30.12. 23:57</div>
<div class="a" style="left:806.5px;top:657.5px;width:1px;height:10.5px;background:#3a4449"></div>
<div class="a" style="left:861.5px;top:657.5px;width:1px;height:10.5px;background:#3a4449"></div>
<div class="a" style="left:897.5px;top:657.5px;width:1px;height:10.5px;background:#3a4449"></div>
<div class="a" style="left:947.5px;top:657.5px;width:1px;height:10.5px;background:#3a4449"></div>
<div class="a" style="left:1026.5px;top:657.5px;width:1px;height:10.5px;background:#3a4449"></div>
<svg style="left:812px;top:658.5px" width="8" height="10" viewBox="0 0 8 10"><ellipse cx="4" cy="2" rx="3.3" ry="1.5" fill="none" stroke="#ddd" stroke-width="1"/><path d="M0.7,2 V8 Q4,10 7.3,8 V2 M0.7,5 Q4,7 7.3,5" fill="none" stroke="#ddd" stroke-width="1"/></svg>
<svg style="left:1085px;top:652px" width="107" height="19" viewBox="0 0 107 19"><g transform="translate(9.4,11.2) rotate(-50)"><rect x="-5.6" y="-2.3" width="11.2" height="4.6" rx="2.3" fill="none" stroke="#d8d8d8" stroke-width="1.2"/><path d="M-3.5,0 H3" stroke="#d8d8d8" stroke-width="0.9"/></g><path d="M17.3,8.8 H19.6 L23.2,5.9 V16 L19.6,13.2 H17.3 Z" fill="#eeeeee"/><path d="M25,8.6 Q26.2,11 25,13.4 M26.9,7 Q29,11 26.9,15" stroke="#eeeeee" stroke-width="1.1" fill="none"/><path d="M34.2,8.6 Q39.3,4.6 44.3,8.6 L39.3,15.1 Z" fill="#eeeeee"/><rect x="47.6" y="8.6" width="13.4" height="8.2" rx="2" fill="#8a8a8a"/><rect x="51.6" y="6.6" width="4.8" height="2.4" rx="0.8" fill="#8a8a8a"/><path d="M50.4,10.6 V13.6 M53,10.2 V13 M55.6,10.2 V13 M58.2,10.6 V13.6 M50.2,14.3 H58.4" stroke="#3a3a3a" stroke-width="0.8"/><path d="M64.6,8.2 Q67.2,7.6 69.3,5.8 Q71.4,7.6 74,8.2 V11 Q74,15.3 69.3,17.6 Q64.6,15.3 64.6,11 Z" fill="#eeeeee"/><rect x="68.6" y="8.8" width="1.5" height="1.5" fill="#222"/><rect x="68.6" y="10.9" width="1.5" height="4.6" fill="#222"/><circle cx="73.6" cy="17" r="1" fill="#3f84e5"/><rect x="77.5" y="4.7" width="13" height="12.8" fill="#ffffff" stroke="#5aa0f0" stroke-width="1"/><path d="M79.6,7.2 L81.6,14.8 L83.4,7.2 M84.3,8.4 Q85.4,6.8 87,7.4 Q88.4,8.4 87,10.6 L84.6,14.6 H88.5" stroke="#4b95ee" stroke-width="1" fill="none"/><ellipse cx="98.8" cy="12.2" rx="6.6" ry="6.4" fill="#e3a24a"/><path d="M92.2,10.4 Q98.8,4.4 105.4,10.4 Q98.8,7.6 92.2,10.4 Z" fill="#9c5f22"/><path d="M102.5,6.6 L105,4.8" stroke="#a8642a" stroke-width="1.2"/><circle cx="101.7" cy="14.3" r="5" fill="#1aa52c"/><path d="M99.1,14.3 L101,16.2 L104.3,12.6" stroke="#fff" stroke-width="1.3" fill="none"/></svg>
</body></html>
